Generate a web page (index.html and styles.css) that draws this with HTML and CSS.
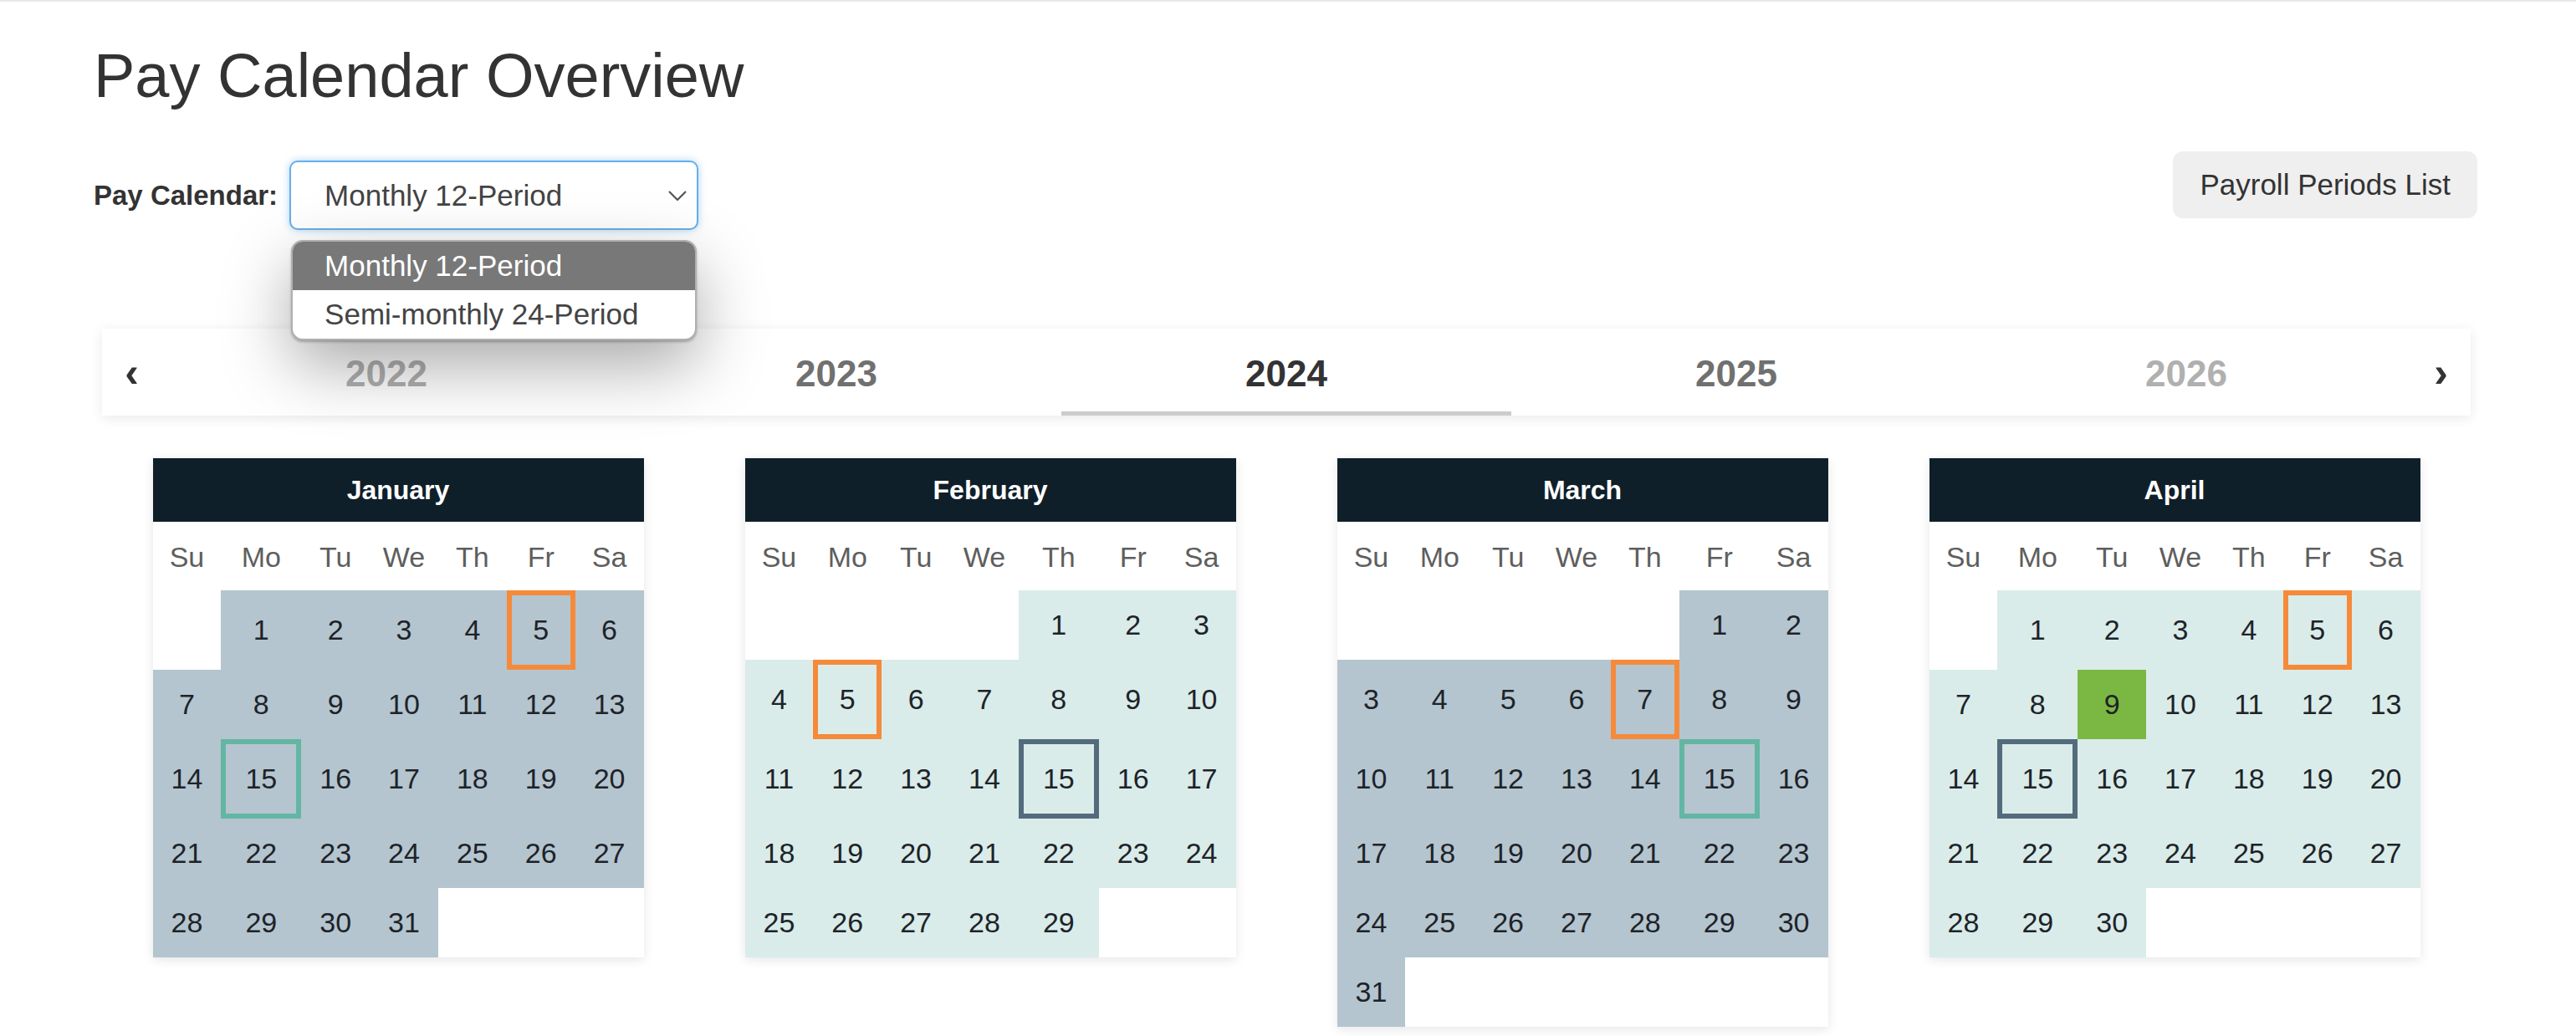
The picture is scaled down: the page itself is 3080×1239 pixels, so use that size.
FILE: index.html
```html
<!DOCTYPE html>
<html lang="en">
<head>
    <meta charset="UTF-8">
    <meta name="viewport" content="width=device-width, initial-scale=1.0">
    <title>Pay Calendar Overview</title>
    <link rel="stylesheet" href="styles.css">
</head>
<body>

    <div class="page">
        <h1>Pay Calendar Overview</h1>

        <div class="toolbar">
            <div class="filter">
                <label for="payCalendar">Pay Calendar:</label>
                <div class="select-wrap">
                    <div class="select" id="payCalendar">
                        <span>Monthly 12-Period</span>
                        <svg class="chevron" width="22" height="12" viewBox="0 0 22 12">
                            <path d="M1 1 L11 11 L21 1" fill="none" stroke="#555" stroke-width="2.2"/>
                        </svg>
                    </div>
                    <ul class="options">
                        <li class="selected">Monthly 12-Period</li>
                        <li>Semi-monthly 24-Period</li>
                    </ul>
                </div>
            </div>
            <button class="btn">Payroll Periods List</button>
        </div>

        <div class="years">
            <button class="arrow">&#8249;</button>
            <div class="year-list">
                <div class="year far">2022</div>
                <div class="year near">2023</div>
                <div class="year active">2024</div>
                <div class="year near">2025</div>
                <div class="year far">2026</div>
            </div>
            <button class="arrow">&#8250;</button>
        </div>

        <div class="months">

            <div class="month">
                <div class="month-name">January</div>
                <table class="cal cal-a">
                    <tr><th>Su</th><th>Mo</th><th>Tu</th><th>We</th><th>Th</th><th>Fr</th><th>Sa</th></tr>
                    <tr><td></td><td class="day">1</td><td class="day">2</td><td class="day">3</td><td class="day">4</td><td class="day pay">5</td><td class="day">6</td></tr>
                    <tr><td class="day">7</td><td class="day">8</td><td class="day">9</td><td class="day">10</td><td class="day">11</td><td class="day">12</td><td class="day">13</td></tr>
                    <tr><td class="day">14</td><td class="day mid">15</td><td class="day">16</td><td class="day">17</td><td class="day">18</td><td class="day">19</td><td class="day">20</td></tr>
                    <tr><td class="day">21</td><td class="day">22</td><td class="day">23</td><td class="day">24</td><td class="day">25</td><td class="day">26</td><td class="day">27</td></tr>
                    <tr><td class="day">28</td><td class="day">29</td><td class="day">30</td><td class="day">31</td><td></td><td></td><td></td></tr>
                </table>
            </div>

            <div class="month">
                <div class="month-name">February</div>
                <table class="cal cal-b">
                    <tr><th>Su</th><th>Mo</th><th>Tu</th><th>We</th><th>Th</th><th>Fr</th><th>Sa</th></tr>
                    <tr><td></td><td></td><td></td><td></td><td class="day">1</td><td class="day">2</td><td class="day">3</td></tr>
                    <tr><td class="day">4</td><td class="day pay">5</td><td class="day">6</td><td class="day">7</td><td class="day">8</td><td class="day">9</td><td class="day">10</td></tr>
                    <tr><td class="day">11</td><td class="day">12</td><td class="day">13</td><td class="day">14</td><td class="day mid">15</td><td class="day">16</td><td class="day">17</td></tr>
                    <tr><td class="day">18</td><td class="day">19</td><td class="day">20</td><td class="day">21</td><td class="day">22</td><td class="day">23</td><td class="day">24</td></tr>
                    <tr><td class="day">25</td><td class="day">26</td><td class="day">27</td><td class="day">28</td><td class="day">29</td><td></td><td></td></tr>
                </table>
            </div>

            <div class="month">
                <div class="month-name">March</div>
                <table class="cal cal-a">
                    <tr><th>Su</th><th>Mo</th><th>Tu</th><th>We</th><th>Th</th><th>Fr</th><th>Sa</th></tr>
                    <tr><td></td><td></td><td></td><td></td><td></td><td class="day">1</td><td class="day">2</td></tr>
                    <tr><td class="day">3</td><td class="day">4</td><td class="day">5</td><td class="day">6</td><td class="day pay">7</td><td class="day">8</td><td class="day">9</td></tr>
                    <tr><td class="day">10</td><td class="day">11</td><td class="day">12</td><td class="day">13</td><td class="day">14</td><td class="day mid">15</td><td class="day">16</td></tr>
                    <tr><td class="day">17</td><td class="day">18</td><td class="day">19</td><td class="day">20</td><td class="day">21</td><td class="day">22</td><td class="day">23</td></tr>
                    <tr><td class="day">24</td><td class="day">25</td><td class="day">26</td><td class="day">27</td><td class="day">28</td><td class="day">29</td><td class="day">30</td></tr>
                    <tr><td class="day">31</td><td></td><td></td><td></td><td></td><td></td><td></td></tr>
                </table>
            </div>

            <div class="month">
                <div class="month-name">April</div>
                <table class="cal cal-b">
                    <tr><th>Su</th><th>Mo</th><th>Tu</th><th>We</th><th>Th</th><th>Fr</th><th>Sa</th></tr>
                    <tr><td></td><td class="day">1</td><td class="day">2</td><td class="day">3</td><td class="day">4</td><td class="day pay">5</td><td class="day">6</td></tr>
                    <tr><td class="day">7</td><td class="day">8</td><td class="day today">9</td><td class="day">10</td><td class="day">11</td><td class="day">12</td><td class="day">13</td></tr>
                    <tr><td class="day">14</td><td class="day mid">15</td><td class="day">16</td><td class="day">17</td><td class="day">18</td><td class="day">19</td><td class="day">20</td></tr>
                    <tr><td class="day">21</td><td class="day">22</td><td class="day">23</td><td class="day">24</td><td class="day">25</td><td class="day">26</td><td class="day">27</td></tr>
                    <tr><td class="day">28</td><td class="day">29</td><td class="day">30</td><td></td><td></td><td></td><td></td></tr>
                </table>
            </div>

        </div>
    </div>

</body>
</html>
```

FILE: styles.css
```css
* {
    margin: 0;
    padding: 0;
    box-sizing: border-box;
}

body {
    font-family: "Liberation Sans", Arial, sans-serif;
    background-color: #fff;
    color: #333;
    border-top: 2px solid #e8e8e8;
}

.page {
    padding: 0 118px 60px 112px;
}

h1 {
    font-size: 74px;
    font-weight: normal;
    color: #333;
    margin: 46px 0 48px;
}

/* pay calendar picker + button */
.toolbar {
    display: flex;
    justify-content: space-between;
    align-items: flex-start;
}

.filter {
    display: flex;
    align-items: center;
    gap: 14px;
    padding-top: 11px;
}

.filter label {
    font-size: 33px;
    font-weight: bold;
    color: #333;
}

.select-wrap {
    position: relative;
}

.select {
    width: 489px;
    height: 83px;
    display: flex;
    align-items: center;
    justify-content: space-between;
    padding: 0 12px 0 40px;
    border: 2px solid #66afe9;
    border-radius: 10px;
    box-shadow: 0 0 10px rgba(102, 175, 233, 0.55);
    font-size: 35px;
    color: #444;
    background-color: #fff;
}

.options {
    list-style: none;
    position: absolute;
    top: 95px;
    left: 2px;
    right: 2px;
    z-index: 10;
    background-color: #fff;
    border: 2px solid #b0b0b0;
    border-radius: 14px;
    overflow: hidden;
    box-shadow: 0 2px 3px rgba(0, 0, 0, 0.25), 0 30px 80px rgba(0, 0, 0, 0.34);
}

.options li {
    font-size: 35px;
    line-height: 40px;
    padding: 9px 0 9px 38px;
    color: #444;
}

.options li.selected {
    background-color: #787878;
    color: #fff;
}

.btn {
    font-family: inherit;
    font-size: 35px;
    line-height: 40px;
    color: #333;
    background-color: #efefef;
    border: none;
    border-radius: 12px;
    padding: 20px 32px;
    cursor: pointer;
}

/* year strip */
.years {
    display: flex;
    align-items: stretch;
    height: 104px;
    margin: 118px 8px 0 10px;
    background-color: #fff;
    box-shadow: 0 3px 14px rgba(0, 0, 0, 0.09);
}

.arrow {
    width: 71px;
    border: none;
    background: none;
    font-family: inherit;
    font-size: 50px;
    font-weight: bold;
    color: #333;
    cursor: pointer;
}

.year-list {
    flex: 1;
    display: flex;
}

.year {
    flex: 1;
    display: flex;
    align-items: center;
    justify-content: center;
    font-size: 44px;
    font-weight: bold;
    border-bottom: 5px solid transparent;
    padding-top: 9px;
}

.year.far {
    color: #b0b0b0;
}

.year.near {
    color: #707070;
}

.year.active {
    color: #333;
    border-bottom-color: #cccccc;
}

/* months */
.months {
    display: grid;
    grid-template-columns: repeat(4, 1fr);
    justify-items: center;
    align-items: start;
    margin: 51px 8px 0 10px;
}

.month {
    width: 587px;
    background-color: #fff;
    box-shadow: 0 3px 12px rgba(0, 0, 0, 0.1);
}

.month-name {
    background-color: #0f1f2a;
    color: #fff;
    font-size: 32px;
    font-weight: bold;
    line-height: 38px;
    padding: 19px 0;
    text-align: center;
}

.cal {
    width: 100%;
    border-collapse: separate;
    border-spacing: 0;
}

.cal th {
    font-size: 34px;
    font-weight: normal;
    line-height: 39px;
    color: #5e5e5e;
    padding: 23px 4px 20px;
    text-align: center;
}

.cal td {
    font-size: 34px;
    line-height: 39px;
    color: #1e2329;
    padding: 22px 16px;
    text-align: center;
}

.cal-a .day {
    background-color: #b4c5cf;
}

.cal-b .day {
    background-color: #d9ece9;
}

.cal td.pay {
    border: 6px solid #f58a3b;
}

.cal td.mid {
    border: 6px solid #63b6a3;
}

.cal-b td.mid {
    border-color: #536b7c;
}

.cal td.today {
    background-color: #7bb843;
}
```
